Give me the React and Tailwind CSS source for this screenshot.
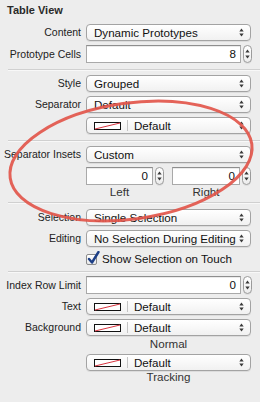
import React from "react";

const font = { fontFamily: '"Liberation Sans", Arial, sans-serif' };

function Arrows() {
  return (
    <svg width="5" height="9" viewBox="0 0 5 9" className="shrink-0">
      <path d="M0.3 3.4 L2.5 0.6 L4.7 3.4 Z" fill="#3a3a3a" />
      <path d="M0.3 5.6 L2.5 8.4 L4.7 5.6 Z" fill="#3a3a3a" />
    </svg>
  );
}

function Popup({ children, className = "" }) {
  return (
    <div
      className={
        "flex h-[17px] w-[165px] items-center justify-between rounded-[4px] border border-[#a3a3a3] bg-gradient-to-b from-white to-[#f1f1f1] pl-[7px] pr-[6px] shadow-[0_1px_0_rgba(0,0,0,0.07)] " +
        className
      }
    >
      <div className="flex items-center text-[11.6px] leading-none text-[#111]">{children}</div>
      <Arrows />
    </div>
  );
}

function Swatch() {
  return (
    <div className="flex items-center">
      <svg width="27" height="8" viewBox="0 0 27 8" className="shrink-0">
        <rect x="0.5" y="0.5" width="26" height="7" fill="white" stroke="#111" strokeWidth="1" />
        <line x1="1" y1="7" x2="26" y2="1" stroke="#d8343f" strokeWidth="1" />
      </svg>
      <div className="ml-[6px] mr-[6px] h-[11px] w-px bg-[#c4c4c4]" />
      <span>Default</span>
    </div>
  );
}

function Stepper() {
  return (
    <div className="ml-[2px] flex h-[18px] w-[9px] flex-col items-center justify-between rounded-full border border-[#9b9b9b] bg-gradient-to-b from-white to-[#ececec] py-[3px] shadow-[0_1px_0_rgba(0,0,0,0.06)]">
      <svg width="5" height="4" viewBox="0 0 5 4">
        <path d="M0.3 3.6 L2.5 0.4 L4.7 3.6 Z" fill="#3a3a3a" />
      </svg>
      <svg width="5" height="4" viewBox="0 0 5 4">
        <path d="M0.3 0.4 L2.5 3.6 L4.7 0.4 Z" fill="#3a3a3a" />
      </svg>
    </div>
  );
}

function Field({ value, w = "w-[155px]" }) {
  return (
    <div className="flex items-center">
      <div
        className={
          "flex h-[18px] items-center justify-end border border-[#a9a9a9] border-t-[#8e8e8e] bg-white pr-[4px] text-[11.6px] leading-none text-[#111] shadow-[inset_0_1px_0_rgba(0,0,0,0.08)] " +
          w
        }
      >
        {value}
      </div>
      <Stepper />
    </div>
  );
}

function Row({ label, children, className = "" }) {
  return (
    <div className={"flex items-center " + className}>
      <div className="w-[81px] shrink-0 whitespace-nowrap text-right text-[10.5px] leading-none text-[#222]">
        {label}
      </div>
      <div className="ml-[5px]">{children}</div>
    </div>
  );
}

function Line({ className = "" }) {
  return (
    <div className={"ml-[8px] flex flex-col " + className}>
      <div className="h-px bg-[#d0d0d0]" />
      <div className="h-px bg-[#f8f8f8]" />
    </div>
  );
}

function Caption({ children, className = "" }) {
  return (
    <div className={"flex h-[12px] items-center justify-center text-[11.6px] leading-none text-[#333] " + className}>
      {children}
    </div>
  );
}

export default function App() {
  return (
    <div
      className="relative h-[402px] w-[260px] overflow-hidden bg-[#ededed]"
      style={font}
    >
      <div className="flex flex-col">
        <div className="h-[24px] pl-[7px] pt-[4px] text-[11px] font-bold leading-[12px] text-[#2a2a2a]">
          Table View
        </div>
        <Row label="Content">
          <Popup>Dynamic Prototypes</Popup>
        </Row>
        <Row label="Prototype Cells" className="mt-[4px]">
          <Field value="8" />
        </Row>
        <Line className="mt-[6px]" />
        <Row label="Style" className="mt-[4px]">
          <Popup>Grouped</Popup>
        </Row>
        <Row label="Separator" className="mt-[4px]">
          <Popup>Default</Popup>
        </Row>
        <Row label="" className="mt-[4px]">
          <Popup>
            <Swatch />
          </Popup>
        </Row>
        <Line className="mt-[6px]" />
        <Row label="Separator Insets" className="mt-[4px]">
          <Popup>Custom</Popup>
        </Row>
        <div className="ml-[86px] mt-[4px] flex">
          <div className="flex flex-col">
            <Field value="0" w="w-[67px]" />
            <Caption className="mt-[1px] w-[67px]">Left</Caption>
          </div>
          <div className="ml-[8px] flex flex-col">
            <Field value="0" w="w-[68px]" />
            <Caption className="mt-[1px] w-[68px]">Right</Caption>
          </div>
        </div>
        <Line className="mt-[4px]" />
        <Row label="Selection" className="mt-[5px]">
          <Popup>Single Selection</Popup>
        </Row>
        <Row label="Editing" className="mt-[4px]">
          <Popup>No Selection During Editing</Popup>
        </Row>
        <div className="ml-[86px] mt-[6px] flex h-[12px] items-center">
          <div className="relative h-[11px] w-[11px] rounded-[2px] border border-[#8c8c8c] bg-gradient-to-b from-white to-[#e9e9e9]">
            <svg
              width="13"
              height="14"
              viewBox="0 0 13 14"
              className="absolute left-[0px] top-[-4px]"
            >
              <path
                d="M2 8 L5 11.5 L11.5 1"
                fill="none"
                stroke="#1d3f86"
                strokeWidth="2.4"
                strokeLinecap="round"
                strokeLinejoin="round"
              />
            </svg>
          </div>
          <span className="ml-[5px] text-[11.6px] leading-none text-[#111]">
            Show Selection on Touch
          </span>
        </div>
        <Line className="mt-[6px]" />
        <Row label="Index Row Limit" className="mt-[3px]">
          <Field value="0" />
        </Row>
        <Row label="Text" className="mt-[4px]">
          <Popup>
            <Swatch />
          </Popup>
        </Row>
        <Row label="Background" className="mt-[4px]">
          <Popup>
            <Swatch />
          </Popup>
        </Row>
        <Caption className="ml-[86px] mt-[2px] w-[165px]">Normal</Caption>
        <div className="ml-[86px] mt-[4px]">
          <Popup>
            <Swatch />
          </Popup>
        </div>
        <Caption className="ml-[86px] mt-[0px] w-[165px]">Tracking</Caption>
      </div>

      <svg
        width="260"
        height="402"
        viewBox="0 0 260 402"
        className="pointer-events-none absolute left-0 top-0"
      >
        <ellipse
          cx="131"
          cy="161"
          rx="122"
          ry="58"
          transform="rotate(-8 131 161)"
          fill="none"
          stroke="#e2564b"
          strokeWidth="3"
          opacity="0.92"
        />
      </svg>
    </div>
  );
}
